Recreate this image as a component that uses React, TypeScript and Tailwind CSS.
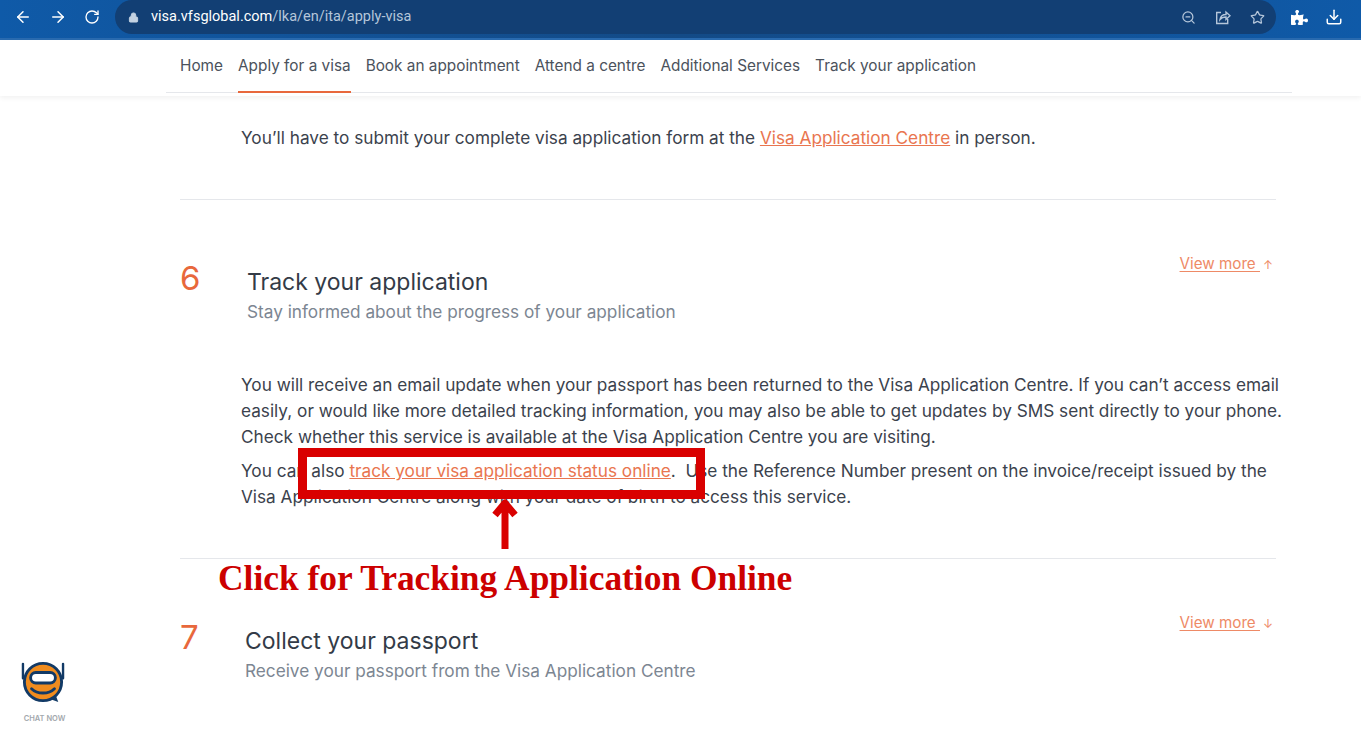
import React from "react";
import { ArrowLeft, ArrowRight, RotateCw, Lock, ZoomOut, Star, Download } from "lucide-react";
import { FaPuzzlePiece } from "react-icons/fa";

const navItems = ["Home", "Apply for a visa", "Book an appointment", "Attend a centre", "Additional Services", "Track your application"];

const StepHeader = ({ num, title, sub, arrow, gap }: { num: string; title: string; sub: string; arrow: string; gap: string }) => (
    <div className="flex items-start">
        <div className={`text-[33px] leading-[40px] text-[#e8683c] ${gap}`}>{num}</div>
        <div className="flex-1 pt-[9px]">
            <h3 className="text-[23px] leading-[30px] text-[#333b47]">{title}</h3>
            <p className="text-[17.2px] leading-[30px] text-[#7c8692]">{sub}</p>
        </div>
        <div className="-mt-[4px] pr-[3px] text-[15.2px] leading-[20px] text-[#ee8a66]">
            <span className="underline underline-offset-2 whitespace-pre">View more </span>
            <span className="ml-[3px] text-[12px]">{arrow}</span>
        </div>
    </div>
);

const ChatLogo = () => (
    <svg width="46" height="42" viewBox="0 0 48 44">
        <path d="M3 3v15M45 3v15" stroke="#123a66" strokeWidth="2.5" strokeLinecap="round" />
        <circle cx="24" cy="22" r="19.5" fill="#f08c1e" stroke="#123a66" strokeWidth="3" />
        <path d="M32 40l8 3-3-8z" fill="#123a66" />
        <rect x="11" y="12" width="26" height="11" rx="5.5" fill="#fff" stroke="#123a66" strokeWidth="3" />
        <path d="M12 29c6 6 18 6 24 0" fill="none" stroke="#123a66" strokeWidth="3" strokeLinecap="round" />
    </svg>
);

const ShareIcon = () => (
    <svg width="16" height="16" viewBox="0 0 16 16" fill="none" stroke="#b5c6da" strokeWidth="1.4" className="ml-[19px]">
        <path d="M6 3.5H1.7v11h11V10" />
        <path d="M5 10.5c.5-3.2 3-5 6-5V3l4 3.7-4 3.7V8c-2.6 0-4.6.8-6 2.5z" />
    </svg>
);

export default function App() {
    return (
        <div className="relative h-[730px] w-[1361px] overflow-hidden bg-white font-['Inter',sans-serif] text-[#3b424d]">
            {/* Browser toolbar */}
            <div className="flex h-[40px] items-center border-b-2 border-[#2a6bb0] bg-gradient-to-r from-[#0f5aa8] via-[#134a86] to-[#0f5aa8] pb-[4px] pl-[14px]">
                <ArrowLeft size={18} className="text-white" />
                <ArrowRight size={18} className="ml-[17px] text-white" />
                <RotateCw size={16} className="ml-[17px] text-white" />
                <div className="ml-[15px] flex h-[34px] w-[1161px] items-center rounded-full bg-[#123f74] pl-[13px]">
                    <Lock size={11} className="fill-[#c4d2e2] text-[#c4d2e2]" />
                    <span className="ml-[12px] font-['Roboto',sans-serif] text-[14.5px] text-white">visa.vfsglobal.com</span>
                    <span className="font-['Roboto',sans-serif] text-[14.5px] text-[#b5c6da]">/lka/en/ita/apply-visa</span>
                    <ZoomOut size={15} className="ml-auto text-[#b5c6da]" />
                    <ShareIcon />
                    <Star size={15} className="ml-[19px] mr-[11px] text-[#b5c6da]" />
                </div>
                <FaPuzzlePiece size={17} className="ml-[15px] text-white" />
                <Download size={18} className="ml-[17px] text-white" />
            </div>

            {/* Site nav */}
            <div className="h-[56px] shadow-[0_2px_5px_rgba(0,0,0,0.06)]">
                <div className="ml-[166px] mr-[69px] flex h-[53px] gap-[15px] border-b border-[#e5e7eb] pl-[14px]">
                    {navItems.map((item) => (
                        <div
                            key={item}
                            className={`h-[53px] pt-[15px] text-[15.35px] leading-[22px] text-[#4b525c] ${item === "Apply for a visa" ? "border-b-2 border-[#e8683c]" : ""}`}
                        >
                            {item}
                        </div>
                    ))}
                </div>
            </div>

            <div className="pl-[180px] pr-[85px]">
                <p className="ml-[61px] mt-[29px] text-[17.22px] leading-[26px]">
                    You’ll have to submit your complete visa application form at the{" "}
                    <span className="text-[#e9754f] underline">Visa Application Centre</span> in person.
                </p>
                <div className="mt-[48px] border-t border-[#e5e7eb]" />

                <div className="mt-[58px]">
                    <StepHeader
                        num="6"
                        title="Track your application"
                        sub="Stay informed about the progress of your application"
                        arrow="↑"
                        gap="w-[67px]"
                    />
                </div>
                <div className="ml-[61px] mr-[-9px] mt-[45px] text-[17.22px] leading-[26px]">
                    <p>
                        You will receive an email update when your passport has been returned to the Visa Application Centre. If you can’t access email easily, or would like more detailed tracking information, you may also be able to get updates by SMS sent directly to your phone. Check whether this service is available at the Visa Application Centre you are visiting.
                    </p>
                    <p className="mt-[8px]">
                        You can also <span className="text-[#e9754f] underline">track your visa application status online</span>.&nbsp; Use the Reference Number present on the invoice/receipt issued by the Visa Application Centre along with your date of birth to access this service.
                    </p>
                </div>
                <div className="mt-[48px] border-t border-[#e5e7eb]" />

                <div className="mt-[58px]">
                    <StepHeader
                        num="7"
                        title="Collect your passport"
                        sub="Receive your passport from the Visa Application Centre"
                        arrow="↓"
                        gap="w-[65px]"
                    />
                </div>
            </div>

            {/* Annotation drawn over the page */}
            <div className="absolute left-[298px] top-[448px] h-[51px] w-[407px] border-[9px] border-[#d90000]" />
            <svg className="absolute left-[490px] top-[498px]" width="30" height="52" viewBox="0 0 30 52">
                <path d="M15 51V6M5 17L15 5l10 12" fill="none" stroke="#d90000" strokeWidth="7" strokeLinejoin="round" />
            </svg>
            <div className="absolute left-[218px] top-[557px] font-['Liberation_Serif',serif] text-[35.4px] font-bold leading-[42px] text-[#cc0000]">
                Click for Tracking Application Online
            </div>

            {/* Chat widget */}
            <div className="absolute left-[20px] top-[661px] flex w-[46px] flex-col items-center">
                <ChatLogo />
                <span className="ml-[3px] mt-[11px] whitespace-nowrap text-[7.5px] font-semibold leading-[10px] text-[#a3a8ad]">CHAT NOW</span>
            </div>
        </div>
    );
}
